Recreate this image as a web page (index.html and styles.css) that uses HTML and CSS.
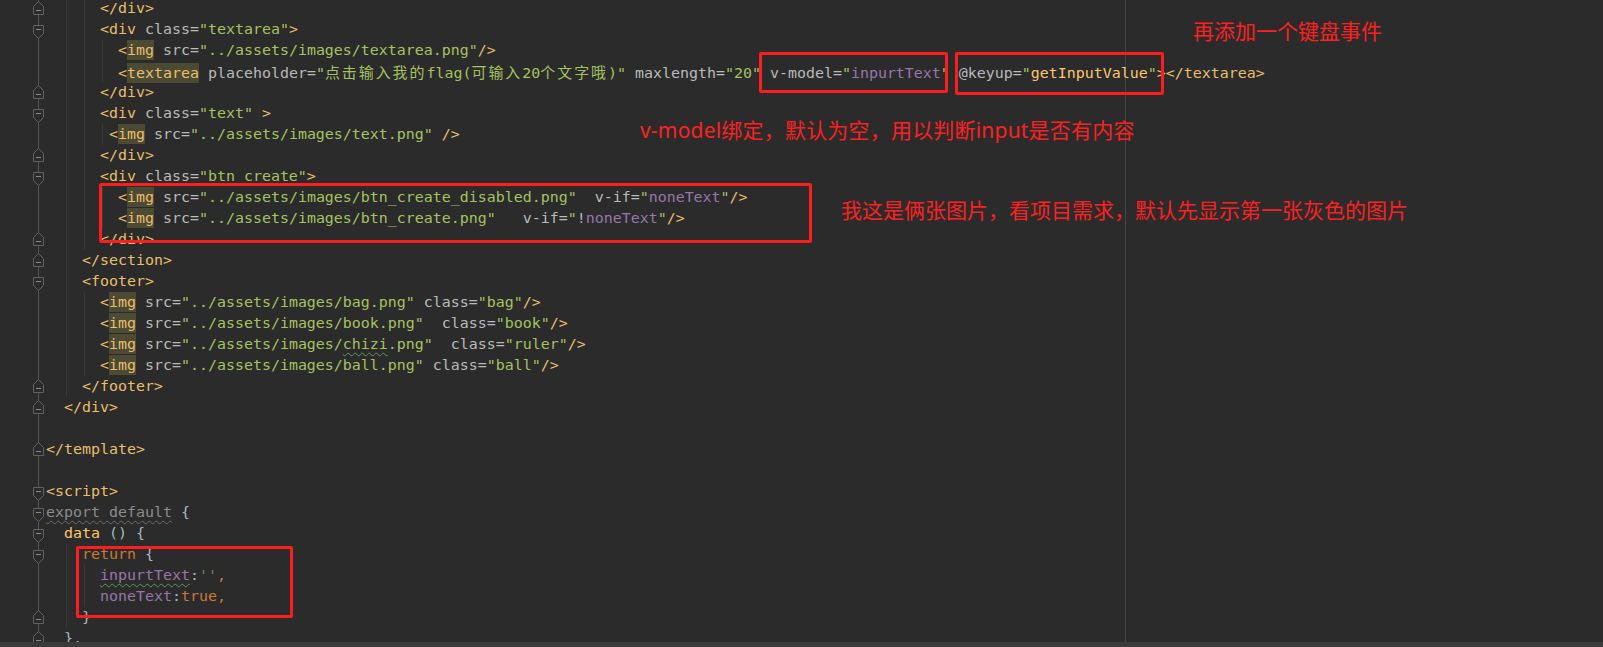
FILE: index.html
```html
<!DOCTYPE html>
<html lang="zh">
<head>
<meta charset="UTF-8">
<title>textarea.vue</title>
<link rel="stylesheet" href="styles.css">
</head>
<body>
<svg class="defs">
  <symbol id="fo" viewBox="0 0 11 14"><path d="M0.5 0.5H10.5V8.5L5.5 13.5L0.5 8.5Z" fill="#2b2b2b" stroke="#616161"/><path d="M3 4.5H8" stroke="#8a8a8a"/></symbol>
  <symbol id="fc" viewBox="0 0 11 14"><path d="M0.5 13.5H10.5V5.5L5.5 0.5L0.5 5.5Z" fill="#2b2b2b" stroke="#616161"/><path d="M3 9.5H8" stroke="#8a8a8a"/></symbol>
</svg>
<div class="ide">
  <div class="editor">
    <div class="lines">
      <div class="ln"><div class="gut"><svg class="fold fe"><use href="#fc"/></svg></div><div class="code"><i class="in"></i><i class="in g"></i><i class="in g"></i><span class="t">&lt;/div&gt;</span></div></div>
      <div class="ln"><div class="gut"><svg class="fold fs"><use href="#fo"/></svg></div><div class="code"><i class="in"></i><i class="in g"></i><i class="in g"></i><span class="t">&lt;div </span><span class="a">class=</span><span class="s">"textarea"</span><span class="t">&gt;</span></div></div>
      <div class="ln"><div class="gut"></div><div class="code"><i class="in"></i><i class="in g"></i><i class="in g"></i><i class="in g"></i><span class="t">&lt;<span class="hl">img</span> </span><span class="a">src=</span><span class="s">"../assets/images/textarea.png"</span><span class="t">/&gt;</span></div></div>
      <div class="ln"><div class="gut"></div><div class="code"><i class="in"></i><i class="in g"></i><i class="in g"></i><i class="in g"></i><span class="t">&lt;<span class="hl">textarea</span> </span><span class="a">placeholder=</span><span class="s">"<span class="cn">点击输入我的</span>flag(<span class="cn">可输入</span>20<span class="cn">个文字哦</span>)"</span> <span class="a">maxlength=</span><span class="s">"20"</span> <span class="a">v-model=</span><span class="s">"</span><span class="p">inpurtText</span><span class="s">"</span> <span class="a">@keyup=</span><span class="s">"</span><span class="f">getInputValue</span><span class="s">"</span><span class="t">&gt;&lt;/textarea&gt;</span></div></div>
      <div class="ln"><div class="gut"><svg class="fold fe"><use href="#fc"/></svg></div><div class="code"><i class="in"></i><i class="in g"></i><i class="in g"></i><span class="t">&lt;/div&gt;</span></div></div>
      <div class="ln"><div class="gut"><svg class="fold fs"><use href="#fo"/></svg></div><div class="code"><i class="in"></i><i class="in g"></i><i class="in g"></i><span class="t">&lt;div </span><span class="a">class=</span><span class="s">"text"</span> <span class="t">&gt;</span></div></div>
      <div class="ln"><div class="gut"></div><div class="code"><i class="in"></i><i class="in g"></i><i class="in g"></i><i class="in half g"></i><span class="t">&lt;<span class="hl">img</span> </span><span class="a">src=</span><span class="s">"../assets/images/text.png"</span> <span class="t">/&gt;</span></div></div>
      <div class="ln"><div class="gut"><svg class="fold fe"><use href="#fc"/></svg></div><div class="code"><i class="in"></i><i class="in g"></i><i class="in g"></i><span class="t">&lt;/div&gt;</span></div></div>
      <div class="ln"><div class="gut"><svg class="fold fs"><use href="#fo"/></svg></div><div class="code"><i class="in"></i><i class="in g"></i><i class="in g"></i><span class="t">&lt;div </span><span class="a">class=</span><span class="s">"btn_create"</span><span class="t">&gt;</span></div></div>
      <div class="ln"><div class="gut"></div><div class="code"><i class="in"></i><i class="in g"></i><i class="in g"></i><i class="in g"></i><span class="t">&lt;<span class="hl">img</span> </span><span class="a">src=</span><span class="s">"../assets/images/btn_create_disabled.png"</span>  <span class="a">v-if=</span><span class="s">"</span><span class="p">noneText</span><span class="s">"</span><span class="t">/&gt;</span></div></div>
      <div class="ln"><div class="gut"></div><div class="code"><i class="in"></i><i class="in g"></i><i class="in g"></i><i class="in g"></i><span class="t">&lt;<span class="hl">img</span> </span><span class="a">src=</span><span class="s">"../assets/images/btn_create.png"</span>   <span class="a">v-if=</span><span class="s">"</span><span class="n">!</span><span class="p">noneText</span><span class="s">"</span><span class="t">/&gt;</span></div></div>
      <div class="ln"><div class="gut"><svg class="fold fe"><use href="#fc"/></svg></div><div class="code"><i class="in"></i><i class="in g"></i><i class="in g"></i><span class="t">&lt;/div&gt;</span></div></div>
      <div class="ln"><div class="gut"><svg class="fold fe"><use href="#fc"/></svg></div><div class="code"><i class="in"></i><i class="in g"></i><span class="t">&lt;/section&gt;</span></div></div>
      <div class="ln"><div class="gut"><svg class="fold fs"><use href="#fo"/></svg></div><div class="code"><i class="in"></i><i class="in g"></i><span class="t">&lt;footer&gt;</span></div></div>
      <div class="ln"><div class="gut"></div><div class="code"><i class="in"></i><i class="in g"></i><i class="in g"></i><span class="t">&lt;<span class="hl">img</span> </span><span class="a">src=</span><span class="s">"../assets/images/bag.png"</span> <span class="a">class=</span><span class="s">"bag"</span><span class="t">/&gt;</span></div></div>
      <div class="ln"><div class="gut"></div><div class="code"><i class="in"></i><i class="in g"></i><i class="in g"></i><span class="t">&lt;<span class="hl">img</span> </span><span class="a">src=</span><span class="s">"../assets/images/book.png"</span>  <span class="a">class=</span><span class="s">"book"</span><span class="t">/&gt;</span></div></div>
      <div class="ln"><div class="gut"></div><div class="code"><i class="in"></i><i class="in g"></i><i class="in g"></i><span class="t">&lt;<span class="hl">img</span> </span><span class="a">src=</span><span class="s">"../assets/images/<span class="typo">chizi</span>.png"</span>  <span class="a">class=</span><span class="s">"ruler"</span><span class="t">/&gt;</span></div></div>
      <div class="ln"><div class="gut"></div><div class="code"><i class="in"></i><i class="in g"></i><i class="in g"></i><span class="t">&lt;<span class="hl">img</span> </span><span class="a">src=</span><span class="s">"../assets/images/ball.png"</span> <span class="a">class=</span><span class="s">"ball"</span><span class="t">/&gt;</span></div></div>
      <div class="ln"><div class="gut"><svg class="fold fe"><use href="#fc"/></svg></div><div class="code"><i class="in"></i><i class="in g"></i><span class="t">&lt;/footer&gt;</span></div></div>
      <div class="ln"><div class="gut"><svg class="fold fe"><use href="#fc"/></svg></div><div class="code"><i class="in"></i><span class="t">&lt;/div&gt;</span></div></div>
      <div class="ln"><div class="gut"></div><div class="code"></div></div>
      <div class="ln"><div class="gut"><svg class="fold fe"><use href="#fc"/></svg></div><div class="code"><span class="t">&lt;/template&gt;</span></div></div>
      <div class="ln"><div class="gut"></div><div class="code"></div></div>
      <div class="ln"><div class="gut"><svg class="fold fs"><use href="#fo"/></svg></div><div class="code"><span class="t">&lt;script&gt;</span></div></div>
      <div class="ln"><div class="gut"><svg class="fold fs"><use href="#fo"/></svg></div><div class="code"><span class="x">export default</span> {</div></div>
      <div class="ln"><div class="gut"><svg class="fold fs"><use href="#fo"/></svg></div><div class="code"><i class="in"></i><span class="f">data</span> () {</div></div>
      <div class="ln"><div class="gut"><svg class="fold fs"><use href="#fo"/></svg></div><div class="code"><i class="in"></i><i class="in g"></i><span class="k">return</span> {</div></div>
      <div class="ln"><div class="gut"></div><div class="code"><i class="in"></i><i class="in g"></i><i class="in g"></i><span class="p typo">inpurtText</span>:<span class="s2">''</span><span class="k">,</span></div></div>
      <div class="ln"><div class="gut"></div><div class="code"><i class="in"></i><i class="in g"></i><i class="in g"></i><span class="p">noneText</span>:<span class="k">true,</span></div></div>
      <div class="ln"><div class="gut"><svg class="fold fe"><use href="#fc"/></svg></div><div class="code"><i class="in"></i><i class="in g"></i>}</div></div>
      <div class="ln"><div class="gut"><svg class="fold fe"><use href="#fc"/></svg></div><div class="code"><i class="in"></i>},</div></div>
    </div>
  </div>
  <div class="hbar"></div>

  <div class="box b1"></div>
  <div class="box b2"></div>
  <div class="box b3"></div>
  <div class="box b4"></div>
  <div class="note n1">再添加一个键盘事件</div>
  <div class="note n2">v-model绑定，默认为空，用以判断input是否有内容</div>
  <div class="note n3">我这是俩张图片，看项目需求，默认先显示第一张灰色的图片</div>
</div>
</body>
</html>
```
FILE: styles.css
```css
* {
    margin: 0;
    padding: 0;
    box-sizing: border-box;
}
body {
    background: #2b2b2b;
}
.defs {
    position: absolute;
    width: 0;
    height: 0;
}
.ide {
    position: relative;
    height: 647px;
    display: flex;
    flex-direction: column;
    overflow: hidden;
    font-family: "DejaVu Sans Mono", "Noto Sans CJK SC", monospace;
    font-size: 14.95px;
}
.editor {
    flex: 1;
    overflow: hidden;
    background:
        linear-gradient(#555, #555) 38px 0 / 1px 100% no-repeat,
        linear-gradient(#474747, #474747) 1125px 0 / 1px 100% no-repeat,
        #2b2b2b;
}
.lines {
    margin-top: -2px;
}
.ln {
    display: flex;
    height: 21px;
    line-height: 21px;
}
.gut {
    width: 46px;
    flex: none;
    padding-left: 33px;
}
.fold {
    display: block;
    width: 11px;
    height: 14px;
}
.fs {
    margin-top: 6px;
}
.fe {
    margin-top: 3px;
}
.code {
    white-space: pre;
    color: #a9b7c6;
}
.in {
    display: inline-block;
    width: 18px;
    height: 21px;
    vertical-align: top;
}
.in.half {
    width: 9px;
}
.in.g {
    background: linear-gradient(#3a3a3a, #3a3a3a) 2px 0 / 1px 100% no-repeat;
}

/* tokens */
.t { color: #e8bf6a; }
.a { color: #bababa; }
.s { color: #a5c261; }
.s2 { color: #6a8759; }
.p { color: #9876aa; }
.f { color: #ffc66d; }
.k { color: #cc7832; }
.n { color: #a9b7c6; }
.x {
    color: #8c8c8c;
    text-decoration: underline wavy #6d6d6d;
    text-decoration-thickness: 1px;
    text-underline-offset: 3px;
}
.typo {
    text-decoration: underline wavy #629755;
    text-decoration-thickness: 1px;
    text-underline-offset: 3px;
}
.hl {
    background: #4d4a34;
    padding: 1px 0;
}
.cn {
    font-family: "Noto Sans CJK SC", sans-serif;
    letter-spacing: 2px;
}

.hbar {
    height: 5px;
    flex: none;
    background: #3a3a3a;
}

/* annotations drawn over the code */
.box {
    position: absolute;
    border: 3px solid #ff1e1e;
    border-radius: 2px;
}
.b1 { left: 759px; top: 52px; width: 189px; height: 41px; }
.b2 { left: 955px; top: 52px; width: 209px; height: 43px; }
.b3 { left: 99px; top: 183px; width: 713px; height: 60px; }
.b4 { left: 76px; top: 546px; width: 217px; height: 72px; }
.note {
    position: absolute;
    color: #ff2121;
    font-family: "Noto Sans", "Noto Sans CJK SC", sans-serif;
    font-size: 21px;
    line-height: 21px;
    white-space: nowrap;
}
.n1 { left: 1193px; top: 21px; }
.n2 { left: 640px; top: 120px; letter-spacing: 0.2px; }
.n3 { left: 841px; top: 200px; }
```
